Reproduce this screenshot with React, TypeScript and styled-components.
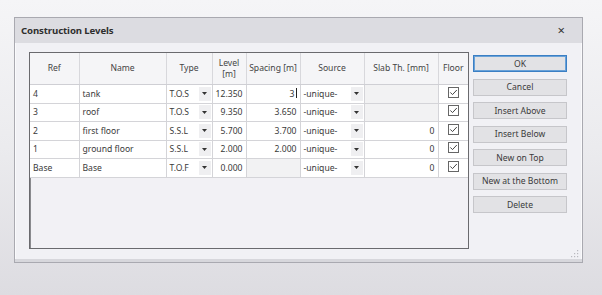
import styled, { createGlobalStyle } from "styled-components";

const GlobalStyle = createGlobalStyle`
  html, body {
    margin: 0;
    padding: 0;
  }
  body {
    width: 602px;
    height: 295px;
    overflow: hidden;
    font-family: "Noto Sans", "Open Sans", "DejaVu Sans", sans-serif;
    background: linear-gradient(180deg, #f5f5f7 0%, #ebebee 50%, #dddce1 100%);
  }
`;

const Page = styled.div`
  width: 602px;
  height: 295px;
  padding: 17px 0 0 14px;
  box-sizing: border-box;
`;

const Dialog = styled.div`
  width: 569px;
  height: 246px;
  box-sizing: border-box;
  border: 1px solid #a9a9b0;
  background-color: #f1f1f5;
  display: flex;
  flex-direction: column;
  position: relative;
  box-shadow: inset 0 -3px 0 #d7d7dc, inset 0 0 0 1px #fafafc;
`;

const TitleBar = styled.div`
  height: 25px;
  background-color: #dcdce1;
  display: flex;
  align-items: center;
  justify-content: space-between;
  padding: 0 17px 0 6px;
  .title {
    font-size: 9.6px;
    font-weight: 700;
    color: #2e2e2e;
    letter-spacing: -0.1px;
  }
  .close {
    font-size: 13px;
    color: #333;
    line-height: 1;
  }
`;

const Body = styled.div`
  display: flex;
  gap: 4px;
  padding: 9px 0 0 14px;
`;

const GridBox = styled.div`
  width: 440px;
  height: 197px;
  box-sizing: border-box;
  border: 1px solid #6a6a6e;
  box-shadow: inset 1px 1px 0 #8a8a8e;
  background-color: #f2f1f5;
`;

const Table = styled.table`
  border-collapse: collapse;
  table-layout: fixed;
  width: 438px;
  font-size: 8.6px;
  color: #3a3a3a;
  th {
    height: 31px;
    font-weight: 400;
    text-align: center;
    background-color: #f5f5f7;
    border-right: 1px solid #d8d8dc;
    border-bottom: 1px solid #cfcfd4;
    line-height: 11px;
    padding: 0 2px;
    color: #444;
  }
  th:last-child {
    border-right: none;
  }
  td {
    height: 17.5px;
    background-color: #ffffff;
    border-right: 1px solid #d4d4d8;
    border-bottom: 1px solid #d4d4d8;
    padding: 0 3px;
    white-space: nowrap;
    overflow: hidden;
  }
  td:last-child {
    border-right: none;
  }
`;

const Cell = styled.td<{ $align?: "left" | "right" | "center"; $muted?: boolean }>`
  text-align: ${(p) => p.$align ?? "left"};
  && {
    background-color: ${(p) => (p.$muted ? "#f2f2f3" : "#ffffff")};
  }
`;

const ComboCell = styled.td`
  && {
    padding: 0 1px 0 3px;
  }
  .combo {
    display: flex;
    align-items: center;
    justify-content: space-between;
  }
  .arrow {
    width: 12px;
    height: 14px;
    background-color: #efeff1;
    display: flex;
    align-items: center;
    justify-content: center;
  }
`;

const Caret = styled.span`
  display: inline-block;
  width: 1px;
  height: 10px;
  background-color: #222;
  vertical-align: -1px;
  margin-left: 1px;
`;

const ButtonColumn = styled.div`
  display: flex;
  flex-direction: column;
  gap: 6.5px;
  padding-top: 3px;
`;

const Button = styled.div<{ $primary?: boolean }>`
  width: 94px;
  height: 17px;
  box-sizing: border-box;
  display: flex;
  align-items: center;
  justify-content: center;
  font-size: 8.6px;
  color: #3a3a3a;
  background-color: #e2e2e5;
  border: 1px solid ${(p) => (p.$primary ? "#3b7fc4" : "#c6c6ca")};
  box-shadow: ${(p) => (p.$primary ? "inset 0 0 0 1px #6aa2d8" : "none")};
`;

const Grip = styled.svg`
  position: absolute;
  right: 3px;
  bottom: 4px;
`;

function DropArrow() {
  return (
    <svg width="5" height="3" viewBox="0 0 5 3">
      <path d="M0 0 H5 L2.5 3 Z" fill="#333" />
    </svg>
  );
}

function CheckBox() {
  return (
    <svg width="11" height="11" viewBox="0 0 11 11">
      <rect x="0.5" y="0.5" width="10" height="10" fill="#fff" stroke="#666" />
      <path d="M2.3 5.4 L4.5 7.6 L8.8 3" fill="none" stroke="#444" strokeWidth="1" />
    </svg>
  );
}

interface Level {
  ref: string;
  name: string;
  type: string;
  level: string;
  spacing: string | null;
  slab: string | null;
  editing?: boolean;
}

const levels: Level[] = [
  { ref: "4", name: "tank", type: "T.O.S", level: "12.350", spacing: "3", slab: null, editing: true },
  { ref: "3", name: "roof", type: "T.O.S", level: "9.350", spacing: "3.650", slab: null },
  { ref: "2", name: "first floor", type: "S.S.L", level: "5.700", spacing: "3.700", slab: "0" },
  { ref: "1", name: "ground floor", type: "S.S.L", level: "2.000", spacing: "2.000", slab: "0" },
  { ref: "Base", name: "Base", type: "T.O.F", level: "0.000", spacing: null, slab: "0" },
];

const buttons = ["OK", "Cancel", "Insert Above", "Insert Below", "New on Top", "New at the Bottom", "Delete"];

export default function App() {
  return (
    <>
      <GlobalStyle />
      <Page>
        <Dialog>
          <TitleBar>
            <span className="title">Construction Levels</span>
            <span className="close">×</span>
          </TitleBar>
          <Body>
            <GridBox>
              <Table>
                <colgroup>
                  <col style={{ width: 49 }} />
                  <col style={{ width: 87 }} />
                  <col style={{ width: 46 }} />
                  <col style={{ width: 34 }} />
                  <col style={{ width: 54 }} />
                  <col style={{ width: 64 }} />
                  <col style={{ width: 74 }} />
                  <col style={{ width: 30 }} />
                </colgroup>
                <thead>
                  <tr>
                    <th>Ref</th>
                    <th>Name</th>
                    <th>Type</th>
                    <th>
                      Level
                      <br />
                      [m]
                    </th>
                    <th>Spacing [m]</th>
                    <th>Source</th>
                    <th>Slab Th. [mm]</th>
                    <th>Floor</th>
                  </tr>
                </thead>
                <tbody>
                  {levels.map((row) => (
                    <tr key={row.ref}>
                      <Cell>{row.ref}</Cell>
                      <Cell>{row.name}</Cell>
                      <ComboCell>
                        <div className="combo">
                          <span>{row.type}</span>
                          <span className="arrow">
                            <DropArrow />
                          </span>
                        </div>
                      </ComboCell>
                      <Cell $align="right">{row.level}</Cell>
                      <Cell $align="right" $muted={row.spacing === null}>
                        {row.spacing}
                        {row.editing && <Caret />}
                      </Cell>
                      <ComboCell>
                        <div className="combo">
                          <span>-unique-</span>
                          <span className="arrow">
                            <DropArrow />
                          </span>
                        </div>
                      </ComboCell>
                      <Cell $align="right" $muted={row.slab === null}>
                        {row.slab}
                      </Cell>
                      <Cell $align="center">
                        <CheckBox />
                      </Cell>
                    </tr>
                  ))}
                </tbody>
              </Table>
            </GridBox>
            <ButtonColumn>
              {buttons.map((label, i) => (
                <Button key={label} $primary={i === 0}>
                  {label}
                </Button>
              ))}
            </ButtonColumn>
          </Body>
          <Grip width="8" height="8" viewBox="0 0 8 8">
            <g fill="#b9b9be">
              <rect x="6" y="0" width="1.2" height="1.2" />
              <rect x="3" y="3" width="1.2" height="1.2" />
              <rect x="6" y="3" width="1.2" height="1.2" />
              <rect x="0" y="6" width="1.2" height="1.2" />
              <rect x="3" y="6" width="1.2" height="1.2" />
              <rect x="6" y="6" width="1.2" height="1.2" />
            </g>
          </Grip>
        </Dialog>
      </Page>
    </>
  );
}
